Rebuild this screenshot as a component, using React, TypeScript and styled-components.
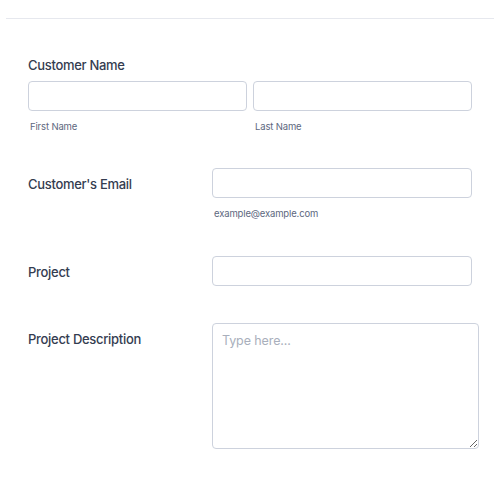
import React from "react";
import styled, { createGlobalStyle } from "styled-components";

const Global = createGlobalStyle`
  html, body { margin: 0; padding: 0; background: #ffffff; }
  body { font-family: Inter, "Noto Sans", sans-serif; -webkit-font-smoothing: antialiased; }
  * { box-sizing: border-box; }
`;

const Page = styled.div`
  width: 500px;
  height: 484px;
  background: #ffffff;
  padding-top: 18px;
`;

const Divider = styled.div`
  margin: 0 6px;
  border-top: 1px solid #e6e8ee;
`;

const Form = styled.form`
  display: flex;
  flex-direction: column;
  gap: 35px;
  padding: 38px 0 0 28px;
`;

const StackRow = styled.div`
  display: flex;
  flex-direction: column;
`;

const SideRow = styled.div<{ $shift?: number }>`
  display: flex;
  align-items: flex-start;
  margin-top: ${(p) => p.$shift ?? 0}px;
`;

const Label = styled.label<{ $side?: boolean }>`
  font-size: 13px;
  line-height: 17px;
  font-weight: 500;
  letter-spacing: -0.3px;
  color: #343c50;
  width: ${(p) => (p.$side ? "184px" : "auto")};
  flex-shrink: 0;
  padding-top: ${(p) => (p.$side ? "8px" : "0")};
`;

const Pair = styled.div`
  display: flex;
  gap: 6px;
  margin-top: 7px;
  width: 444px;
`;

const Field = styled.div<{ $w?: number }>`
  display: flex;
  flex-direction: column;
  width: ${(p) => (p.$w ? `${p.$w}px` : "auto")};
  flex: ${(p) => (p.$w ? "none" : "1")};
`;

const Input = styled.input`
  height: 30px;
  width: 100%;
  border: 1px solid #cdd2dd;
  border-radius: 4px;
  background: #ffffff;
  font-family: inherit;
  font-size: 13px;
  padding: 0 9px;
  outline: none;
`;

const Sub = styled.span`
  margin-top: 10px;
  padding-left: 2px;
  font-size: 9.5px;
  line-height: 12px;
  letter-spacing: -0.15px;
  color: #5d6880;
`;

const TextArea = styled.textarea`
  width: 267px;
  height: 126px;
  border: 1px solid #cdd2dd;
  border-radius: 4px;
  font-family: inherit;
  font-size: 12.5px;
  line-height: 17px;
  letter-spacing: -0.1px;
  padding: 8px 9px;
  color: #2c3345;
  outline: none;
  resize: both;
  &::placeholder { color: #a9afbc; }
`;

export default function App() {
  return (
    <Page>
      <Global />
      <Divider />
      <Form>
        <StackRow>
          <Label>Customer Name</Label>
          <Pair>
            <Field>
              <Input type="text" />
              <Sub>First Name</Sub>
            </Field>
            <Field>
              <Input type="text" />
              <Sub>Last Name</Sub>
            </Field>
          </Pair>
        </StackRow>
        <SideRow>
          <Label $side>Customer's Email</Label>
          <Field $w={260}>
            <Input type="email" />
            <Sub>example@example.com</Sub>
          </Field>
        </SideRow>
        <SideRow $shift={1}>
          <Label $side>Project</Label>
          <Field $w={260}>
            <Input type="text" />
          </Field>
        </SideRow>
        <SideRow $shift={2}>
          <Label $side>Project Description</Label>
          <TextArea placeholder="Type here..." />
        </SideRow>
      </Form>
    </Page>
  );
}
